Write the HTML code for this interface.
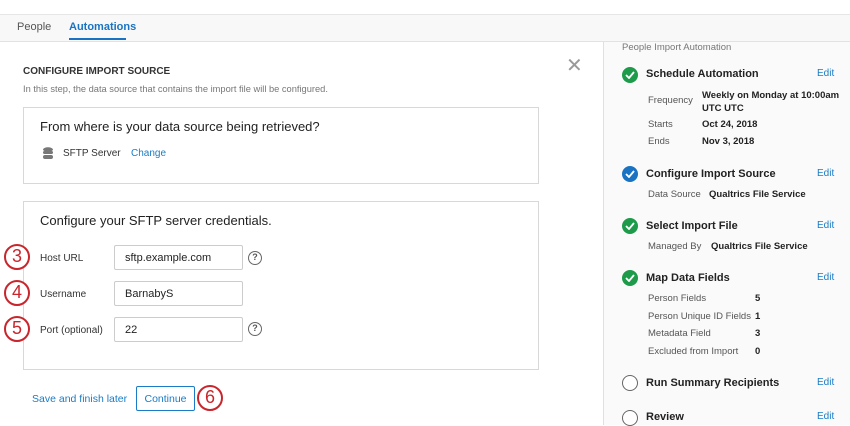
<!DOCTYPE html><html><head><style>
*{margin:0;padding:0;box-sizing:border-box}
body{width:850px;height:425px;overflow:hidden;background:#fff;font-family:"Liberation Sans",sans-serif;color:#333;position:relative}
.a{position:absolute;white-space:nowrap}
.lnk{color:#1a7cc6}
.box{position:absolute;border:1px solid #d8d8d8;background:#fff}
.rc{position:absolute;width:26px;height:26px;border:2.5px solid #c8262c;border-radius:50%;color:#c8262c;font-size:18px;text-align:center;line-height:21px;background:#fff}
.inp{position:absolute;left:114px;width:129px;height:25px;border:1px solid #ccc;border-radius:2px;font-size:11px;padding:6px 10px;color:#222}
.lbl{position:absolute;left:40px;font-size:10px;color:#333}
.q{position:absolute;left:248px;width:14px;height:14px;border:1.5px solid #666;border-radius:50%;font-size:9px;text-align:center;line-height:11px;color:#555;font-weight:bold}
.ic{position:absolute;left:622px;width:16px;height:16px;border-radius:50%}
.g{background:#1d9a4a}.b{background:#1a73c2}.o{border:1.5px solid #666;background:#fff}
.ic svg{position:absolute;left:3px;top:4px}
.st{position:absolute;left:646px;font-size:11px;font-weight:bold;color:#222}
.ed{position:absolute;left:817px;font-size:10px;color:#1a7cc6}
.k{position:absolute;font-size:9.5px;color:#555}
.v{position:absolute;font-size:9.5px;font-weight:bold;color:#222}
</style></head><body>
<div class="a" style="left:0;top:14px;width:850px;height:28px;background:#f8f8f8;border-top:1px solid #e6e6e6;border-bottom:1px solid #e2e2e2"></div>
<div class="a" style="left:17px;top:21px;font-size:11px;color:#555">People</div>
<div class="a" style="left:69px;top:21px;font-size:11px;font-weight:bold;color:#1a73c2">Automations</div>
<div class="a" style="left:69px;top:38px;width:57px;height:2px;background:#1a73c2"></div>
<div class="a" style="left:603px;top:42px;width:247px;height:383px;background:#fafafa;border-left:1px solid #e0e0e0"></div>
<div class="a" style="left:23px;top:66px;font-size:10px;font-weight:bold;color:#333">CONFIGURE IMPORT SOURCE</div>
<div class="a" style="left:23px;top:84px;font-size:9.3px;color:#777">In this step, the data source that contains the import file will be configured.</div>
<div class="a" style="left:566px;top:53px;font-size:20px;color:#999">✕</div>
<div class="box" style="left:23px;top:107px;width:516px;height:77px"></div>
<div class="a" style="left:40px;top:119px;font-size:13px;color:#222">From where is your data source being retrieved?</div>
<svg class="a" style="left:43px;top:147px" width="10" height="13"><ellipse cx="5" cy="2.5" rx="5" ry="2.2" fill="#777"/><rect x="0" y="4" width="10" height="3" rx="1.5" fill="#777"/><rect x="0" y="8" width="10" height="4" rx="2" fill="#777"/></svg>
<div class="a" style="left:63px;top:148px;font-size:10px">SFTP Server</div>
<div class="a lnk" style="left:131px;top:148px;font-size:10px">Change</div>
<div class="box" style="left:23px;top:201px;width:516px;height:169px"></div>
<div class="a" style="left:40px;top:213px;font-size:13px;color:#222">Configure your SFTP server credentials.</div>
<div class="rc" style="left:4px;top:244px">3</div><div class="lbl" style="top:253px">Host URL</div><div class="inp" style="top:245px">sftp.example.com</div><div class="q" style="top:251px">?</div>
<div class="rc" style="left:4px;top:280px">4</div><div class="lbl" style="top:289px">Username</div><div class="inp" style="top:281px">BarnabyS</div>
<div class="rc" style="left:4px;top:316px">5</div><div class="lbl" style="top:325px">Port (optional)</div><div class="inp" style="top:317px">22</div><div class="q" style="top:322px">?</div>
<div class="a lnk" style="left:32px;top:393px;font-size:10.5px">Save and finish later</div>
<div class="a" style="left:136px;top:386px;width:59px;height:25px;border:1px solid #1a7cc6;border-radius:2px;font-size:10.5px;color:#1a7cc6;display:flex;align-items:center;justify-content:center">Continue</div>
<div class="rc" style="left:197px;top:385px">6</div>
<div class="a" style="left:622px;top:42px;font-size:9.5px;color:#777">People Import Automation</div>
<div class="ic g" style="top:67px"><svg width="10" height="8"><path d="M1 4l3 3 5-6" stroke="#fff" stroke-width="1.8" fill="none"/></svg></div>
<div class="st" style="top:68px">Schedule Automation</div><div class="ed" style="top:68px">Edit</div>
<div class="k" style="left:648px;top:95px">Frequency</div><div class="v" style="left:702px;top:89px;line-height:13px">Weekly on Monday at 10:00am<br>UTC UTC</div>
<div class="k" style="left:648px;top:119px">Starts</div><div class="v" style="left:702px;top:119px">Oct 24, 2018</div>
<div class="k" style="left:648px;top:136px">Ends</div><div class="v" style="left:702px;top:136px">Nov 3, 2018</div>
<div class="ic b" style="top:166px"><svg width="10" height="8"><path d="M1 4l3 3 5-6" stroke="#fff" stroke-width="1.8" fill="none"/></svg></div>
<div class="st" style="top:168px">Configure Import Source</div><div class="ed" style="top:168px">Edit</div>
<div class="k" style="left:648px;top:189px">Data Source</div><div class="v" style="left:709px;top:189px">Qualtrics File Service</div>
<div class="ic g" style="top:218px"><svg width="10" height="8"><path d="M1 4l3 3 5-6" stroke="#fff" stroke-width="1.8" fill="none"/></svg></div>
<div class="st" style="top:220px">Select Import File</div><div class="ed" style="top:220px">Edit</div>
<div class="k" style="left:648px;top:241px">Managed By</div><div class="v" style="left:711px;top:241px">Qualtrics File Service</div>
<div class="ic g" style="top:270px"><svg width="10" height="8"><path d="M1 4l3 3 5-6" stroke="#fff" stroke-width="1.8" fill="none"/></svg></div>
<div class="st" style="top:272px">Map Data Fields</div><div class="ed" style="top:272px">Edit</div>
<div class="k" style="left:648px;top:293px">Person Fields</div><div class="v" style="left:755px;top:293px">5</div>
<div class="k" style="left:648px;top:311px">Person Unique ID Fields</div><div class="v" style="left:755px;top:311px">1</div>
<div class="k" style="left:648px;top:328px">Metadata Field</div><div class="v" style="left:755px;top:328px">3</div>
<div class="k" style="left:648px;top:346px">Excluded from Import</div><div class="v" style="left:755px;top:346px">0</div>
<div class="ic o" style="top:375px"></div>
<div class="st" style="top:377px">Run Summary Recipients</div><div class="ed" style="top:377px">Edit</div>
<div class="ic o" style="top:410px"></div>
<div class="st" style="top:411px">Review</div><div class="ed" style="top:411px">Edit</div>
</body></html>
